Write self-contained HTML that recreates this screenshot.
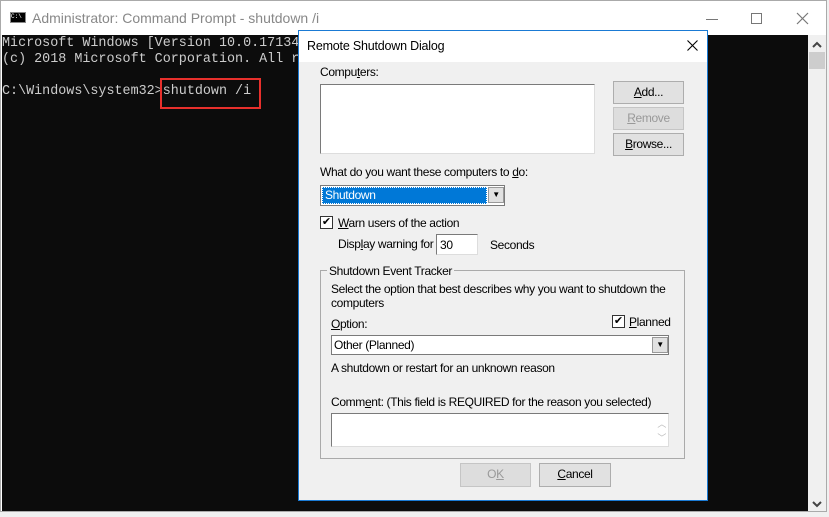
<!DOCTYPE html>
<html><head><style>
*{margin:0;padding:0;box-sizing:border-box}
body{width:829px;height:517px;background:#f0f0f0;position:relative;overflow:hidden;font-family:"Liberation Sans",sans-serif;font-size:12px;letter-spacing:-0.35px;color:#000}
.a{position:absolute}
.win{left:0;top:0;width:827px;height:512px;background:#fff;border:1px solid #aaa}
.con{left:2px;top:35px;width:806px;height:476px;background:#0c0c0c;color:#ccc;font-family:"Liberation Mono",monospace;font-size:13.4px;line-height:16px;letter-spacing:0}
.sb{left:808px;top:35px;width:18px;height:476px;background:#f0f0f0}
.dlg{left:298px;top:30px;width:410px;height:471px;background:#f0f0f0;border:1px solid #1a7ad4}
.t{white-space:nowrap}
.btn{background:#e1e1e1;border:1px solid #adadad;text-align:center;line-height:20px}
.box{background:#fff;border:1px solid #7a7a7a;border-right-color:#ddd;border-bottom-color:#ddd}
.cb{width:13px;height:13px;background:#fff;border:1px solid #333;font-size:11px;line-height:11px;text-align:center;letter-spacing:0}
.dd{width:16px;height:16px;background:#e1e1e1;border:1px solid #999;font-size:8px;text-align:center;line-height:14px}
u{text-decoration:underline}
</style></head><body>
<div class="a win"></div>
<div class="a" style="left:10px;top:12px;width:16px;height:11px;background:#000;border:1px solid #888"><div style="color:#fff;font-size:6px;line-height:8px;font-family:'Liberation Mono',monospace;letter-spacing:0">C:\</div></div>
<div class="a t" style="left:32px;top:10px;font-size:14px;color:#888;letter-spacing:0">Administrator: Command Prompt - shutdown /i</div>
<div class="a" style="left:706px;top:19px;width:12px;height:1px;background:#777"></div>
<div class="a" style="left:751px;top:13px;width:11px;height:11px;border:1px solid #777"></div>
<svg class="a" style="left:796px;top:12px" width="13" height="13"><path d="M1 1L12 12M12 1L1 12" stroke="#777" stroke-width="1.2"/></svg>
<div class="a con"><pre style="font-family:inherit;padding-top:1px">Microsoft Windows [Version 10.0.17134.
(c) 2018 Microsoft Corporation. All rights

C:\Windows\system32&gt;shutdown /i</pre></div>
<div class="a" style="left:160px;top:78px;width:101px;height:31px;border:2px solid #e8302c"></div>
<div class="a sb"><svg class="a" style="left:4px;top:6px" width="10" height="8"><path d="M1 6L5 2L9 6" stroke="#444" stroke-width="2" fill="none"/></svg><div class="a" style="left:1px;top:17px;width:16px;height:17px;background:#cdcdcd"></div><svg class="a" style="left:4px;top:465px" width="10" height="8"><path d="M1 2L5 6L9 2" stroke="#444" stroke-width="2" fill="none"/></svg></div>
<div class="a dlg">
<div class="a" style="left:0;top:0;width:408px;height:31px;background:#fff"></div>
<div class="a t" style="left:8px;top:8px;font-size:12.5px;letter-spacing:-0.2px">Remote Shutdown Dialog</div>
<svg class="a" style="left:388px;top:9px" width="11" height="11"><path d="M0.5 0.5L10.5 10.5M10.5 0.5L0.5 10.5" stroke="#000" stroke-width="1.1"/></svg>
</div>
<div class="a t" style="left:320px;top:65px">Compu<u>t</u>ers:</div>
<div class="a box" style="left:320px;top:84px;width:275px;height:70px"></div>
<div class="a btn" style="left:613px;top:81px;width:71px;height:23px"><u>A</u>dd...</div>
<div class="a btn" style="left:613px;top:107px;width:71px;height:23px;color:#999;background:#ddd;border-color:#c5c5c5"><u>R</u>emove</div>
<div class="a btn" style="left:613px;top:133px;width:71px;height:23px"><u>B</u>rowse...</div>
<div class="a t" style="left:320px;top:165px">What do you want these computers to <u>d</u>o:</div>
<div class="a" style="left:320px;top:185px;width:185px;height:21px;background:#fff;border:1px solid #7a7a7a"><div class="a" style="left:1px;top:1px;width:165px;height:17px;background:#0078d7;color:#fff;padding-left:3px;line-height:17px;outline:1px dotted #fff;outline-offset:-1px">Shutdown</div><div class="a dd" style="left:167px;top:1px">▼</div></div>
<div class="a cb" style="left:320px;top:216px">✔</div>
<div class="a t" style="left:338px;top:216px"><u>W</u>arn users of the action</div>
<div class="a t" style="left:338px;top:237px">Disp<u>l</u>ay warning for</div>
<div class="a box" style="left:436px;top:234px;width:42px;height:21px;padding:3px 3px;font-size:12px">30</div>
<div class="a t" style="left:490px;top:238px">Seconds</div>
<div class="a" style="left:320px;top:270px;width:365px;height:189px;border:1px solid #aaa"></div>
<div class="a t" style="left:327px;top:264px;background:#f0f0f0;padding:0 2px">Shutdown Event Tracker</div>
<div class="a" style="left:331px;top:282px;line-height:14px;width:362px">Select the option that best describes why you want to shutdown the<br>computers</div>
<div class="a t" style="left:331px;top:317px"><u>O</u>ption:</div>
<div class="a cb" style="left:612px;top:315px">✔</div>
<div class="a t" style="left:629px;top:315px"><u>P</u>lanned</div>
<div class="a" style="left:331px;top:335px;width:338px;height:20px;background:#fff;border:1px solid #7a7a7a;padding:3px 2px;line-height:13px">Other (Planned)<div class="a dd" style="left:320px;top:1px">▼</div></div>
<div class="a t" style="left:331px;top:361px">A shutdown or restart for an unknown reason</div>
<div class="a t" style="left:331px;top:395px">Comm<u>e</u>nt: (This field is REQUIRED for the reason you selected)</div>
<div class="a box" style="left:331px;top:413px;width:338px;height:34px"><div class="a" style="right:2px;top:3px;color:#bbb;font-size:9px;line-height:14px">︿<br>﹀</div></div>
<div class="a btn" style="left:460px;top:463px;width:71px;height:24px;color:#999;background:#ddd;border-color:#c5c5c5">O<u>K</u></div>
<div class="a btn" style="left:539px;top:463px;width:72px;height:24px"><u>C</u>ancel</div>
</body></html>
